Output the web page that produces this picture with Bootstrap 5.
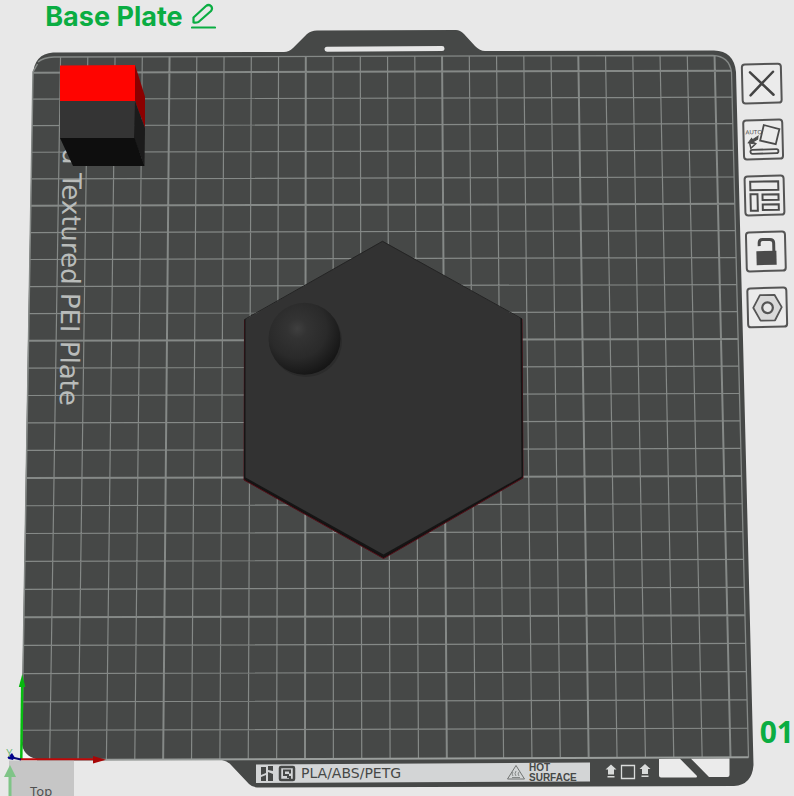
<!DOCTYPE html>
<html lang="en">
<head>
<meta charset="utf-8">
<meta name="viewport" content="width=device-width, initial-scale=1">
<title>Base Plate</title>
<link rel="stylesheet" href="https://cdn.jsdelivr.net/npm/bootstrap@5.3.0/dist/css/bootstrap.min.css">
<style>
  body { background: #e8e8e8; font-family: Inter, "Open Sans", sans-serif; }
  .stage { aspect-ratio: 794 / 796; }
  .plate-head { top: 0; left: 5.7%; color: #0aad42; }
  .plate-title { font-size: 27px; line-height: 33px; font-weight: 700; }
  .tool { color: #4b4b4b; line-height: 0; }
  .plate-tools { top: 7.9%; right: 1.1%; gap: 15px; transform: rotate(-1.4deg); }
  .plate-tools .tool { width: 41px; height: 41px; border: 2px solid #555; border-radius: 4px; background: #ebebeb; }
  .plate-number { right: 0; bottom: 5.4%; color: #0aad42; font-family: "Open Sans", sans-serif; font-size: 30px; line-height: 42px; font-weight: 700; }
</style>
<script src="https://cdn.jsdelivr.net/npm/bootstrap@5.3.0/dist/js/bootstrap.bundle.min.js"></script>
</head>
<body>
<main class="stage position-relative w-100 overflow-hidden">
  <svg class="d-block w-100 h-100" viewBox="0 0 794 796" role="img" aria-label="Build plate seen from the top">
    <defs>
      <radialGradient id="ball" cx="0.4" cy="0.36" r="0.68">
        <stop offset="0" stop-color="#3f3f3f"/><stop offset="0.2" stop-color="#333"/>
        <stop offset="0.6" stop-color="#2a2a2a"/><stop offset="1" stop-color="#141414"/>
      </radialGradient>
      <clipPath id="bed"><path d="M33.5 75 Q34 57 52 57 L713 55.500 Q730 56 731.500 72 L748.500 757.500 L38 760 Q22 757 21.500 742Z"/></clipPath>
    </defs>

    <!-- plate body with handle and label strip -->
    <path fill="#464847" d="M33 75 Q34 54 53 52.500 L284 52 Q289 52 293 48 L307 34 Q311 30.500 317 30.500 L456 30 Q460 30 464 34 L475 46 Q480 51 485 51 L714 50.500 Q734 51 736 72 L743 340 L753.500 765 Q752 785 734 786 L257 787.500 Q252 787 249 784 L232 766 Q228 761 222 760 L39 759.500 Q22 757 21.500 740 L28 340Z"/>
    <path fill="none" stroke="#e6e6e6" stroke-width="5" stroke-linecap="round" d="M327 49.200 L442 48.600"/>
    <path fill="none" stroke="#858987" stroke-width="1.500" d="M37.500 64 L33 72 L21.800 742"/>
    <g clip-path="url(#bed)" fill="none" stroke="#858987">
      <path id="thin" stroke-width="1.200"/>
      <path id="thick" stroke-width="2"/>
    </g>
    <path fill="none" stroke="#858987" stroke-width="1.300" d="M38 62 Q43 57.500 54 57 L713 55.500 Q729 56 731.500 72 L748.500 757.500"/>
    <path fill="none" stroke="#9a9e9c" stroke-width="2" d="M37 760 L748.500 757.300"/>

    <text transform="translate(63 148) rotate(90.700)" font-family="DejaVu Sans, sans-serif" font-size="26" fill="#b9bcba">d Textured PEI Plate</text>

    <!-- label strip -->
    <path fill="#d3d5d6" d="M256 764.500 L590 762.500 V781.500 L256 783Z"/>
    <path fill="#464847" d="M261 767h5v6l-5 2zM268 766h5v5l-5-1zM261 777l5-2v6h-5zM268 772l5 2v7h-5z"/>
    <rect x="280" y="767" width="14" height="13" rx="1" fill="none" stroke="#464847" stroke-width="2.500"/>
    <path fill="none" stroke="#464847" stroke-width="2" d="M283 770.500h7v3M284 770v5h4v3M290 776v3"/>
    <g font-family="DejaVu Sans, sans-serif" fill="#464847">
      <text x="301" y="778" font-size="14">PLA/ABS/PETG</text>
      <g font-family="Liberation Sans, sans-serif" font-size="10" font-weight="bold">
        <text x="529" y="771">HOT</text>
        <text x="529" y="781">SURFACE</text>
      </g>
    </g>
    <path fill="none" stroke="#707372" d="M516 765.500 L507.500 779 H524.500Z"/>
    <path fill="none" stroke="#707372" stroke-width="0.800" d="M513 776q-2-2 0-4M516 776q-2-2 0-5M519 776q-2-2 0-4M512 777.500h8"/>
    <g fill="#d9dbda">
      <path d="M611 764.500 L616.500 769.500 H614 V774.500 H608 V769.500 H605.500ZM607.500 776h7v1.600h-7z"/>
      <path d="M645 764 L650.500 769 H648 V774 H642 V769 H639.500ZM641.500 775.500h7v1.600h-7z"/>
      <path fill="none" stroke="#d9dbda" stroke-width="1.300" d="M621.500 765.500h13v13h-13z"/>
      <path fill="#ebebeb" d="M659 759 L680 758.800 L697 776 Q697 777.500 696 777.500 H661 Q659 777.500 659 775.500ZM691 758.700 L729.500 758.500 V775 Q729.500 777 727.500 777 H709Z"/>
    </g>

    <!-- two-colour block -->
    <path fill="#ff0400" d="M60 65.500 L135 65 L135.500 101 H60Z"/>
    <path fill="#8c0000" d="M135 65 L145 96.500 V128 L135 101Z"/>
    <path fill="#343434" d="M60 101 H135.500 L134.500 138 H60Z"/>
    <path fill="#1b1b1b" d="M135 101 L145 128 L144.500 166 L134 138Z"/>
    <path fill="#0e0e0e" d="M60 138 H134.500 L144.500 166 H73Z"/>

    <!-- hexagonal base -->
    <path fill="#1a1010" stroke="#521019" stroke-width="1" d="M244.500 320 L244 480 L383.500 558.500 L523 478 L522 319Z"/>
    <path fill="#151515" d="M244.500 319 L244 478.500 L383.500 557 L523 476.500 L522 318Z"/>
    <path fill="#323232" d="M382.500 241 L520.500 318.500 L521.500 476.500 L383.500 554.500 L245.500 477.500 V319.500Z"/>
    <path fill="none" stroke="#242424" d="M244.500 319.500 L382.500 241.300 L521.500 318.500"/>
    <ellipse cx="306" cy="341" rx="36" ry="36" fill="#2b2b2b"/>
    <circle cx="304.500" cy="338.700" r="36" fill="url(#ball)"/>

    <!-- origin axes -->
    <path fill="#f4f4f4" d="M22 747 Q25 757 36 759 H22Z"/>
    <path fill="#c6c6c6" d="M9 760.500H74V796H9Z"/>
    <path stroke="#7fc487" stroke-width="3" d="M10 774V796"/>
    <path fill="#7fc487" d="M10 765L16 777H4Z"/>
    <path stroke="#07bd10" stroke-width="2.500" d="M21.300 759L22.200 684"/>
    <path fill="#07b80f" d="M22.300 674L25.300 687H18.800Z"/>
    <path stroke="#bd0808" stroke-width="2" d="M20 759.300H95"/>
    <path fill="#a80606" d="M106 759.800L93 756V763.500Z"/>
    <path stroke="#050575" stroke-width="2" d="M21 759.500L12 757.500"/>
    <path fill="#00008c" d="M7.500 757.500L12 753L14.500 757L13 760L8.500 759Z"/>
    <text x="6" y="757" font-family="Liberation Sans, sans-serif" font-size="10" fill="#72ba7a">Y</text>
    <text x="30" y="796" font-family="Noto Sans, sans-serif" font-size="13" fill="#505050">Top</text>
  </svg>

  <header class="plate-head position-absolute d-flex align-items-center gap-2">
    <h1 class="plate-title m-0">Base Plate</h1>
    <button type="button" class="btn p-0 border-0 lh-1" aria-label="Rename plate">
      <svg class="d-block" width="25" height="28" viewBox="0 0 25 28" fill="none" stroke="#0aad42" stroke-width="2.200" stroke-linecap="round" stroke-linejoin="round"><path d="M1 24.500H24M2.500 19.500V14.500L15 3Q17.500 1 20 3Q22 5.500 20 8L7.500 19Q5 20 2.500 19.500Z"/></svg>
    </button>
  </header>

  <nav class="plate-tools position-absolute d-flex flex-column" aria-label="Plate tools">
    <button type="button" class="tool btn p-0 d-flex align-items-center justify-content-center" aria-label="Remove plate contents">
      <svg width="37" height="37" viewBox="0 0 37 37" stroke="#444" stroke-width="2.500" stroke-linecap="round"><path d="M7 7L30 30M30 7L7 30"/></svg>
    </button>
    <button type="button" class="tool btn p-0 d-flex align-items-center justify-content-center" aria-label="Auto orient">
      <svg width="37" height="37" viewBox="0 0 37 37" fill="none" stroke="#4b4b4b" stroke-width="1.800"><path d="M19.500 4L35 8.500L31 23.500L15.500 19.500Z"/><rect x="5.500" y="28.500" width="28" height="4" rx="2"/><path fill="#4b4b4b" stroke-width="1" d="M13.500 15L8 18.500L7 17L3.500 21.500L8.500 22.500L8.500 20.500L13 18Z"/><path stroke-width="1.500" d="M5 22L6 27L11 22.500L8 21"/><text x="1" y="13" font-family="Liberation Sans, sans-serif" font-size="6" fill="#4b4b4b" stroke="none">AUTO</text></svg>
    </button>
    <button type="button" class="tool btn p-0 d-flex align-items-center justify-content-center" aria-label="Arrange objects">
      <svg width="37" height="37" viewBox="0 0 37 37" fill="none" stroke="#4b4b4b" stroke-width="2"><path d="M4.500 4.500H32.500V13H4.500ZM4.500 17H11.500V33.500H4.500ZM16.500 17.500H32.500V23H16.500ZM16.500 27.500H32.500V33H16.500Z"/></svg>
    </button>
    <button type="button" class="tool btn p-0 d-flex align-items-center justify-content-center" aria-label="Lock plate">
      <svg width="37" height="37" viewBox="0 0 37 37"><path fill="#4b4b4b" d="M9 18H29V32H9Z"/><path fill="none" stroke="#4b4b4b" stroke-width="3" d="M12 13V10Q12 6.500 15.500 6.500H22.500Q26.500 6.500 26.500 10V19"/></svg>
    </button>
    <button type="button" class="tool btn p-0 d-flex align-items-center justify-content-center" aria-label="Plate settings">
      <svg width="37" height="37" viewBox="0 0 37 37" fill="#d9d9d9" stroke="#555" stroke-width="1.800" stroke-linejoin="round"><path d="M11.500 6H26L33 18.500L26 31.500H11.500L4.500 18.500Z"/><circle cx="18.800" cy="18.800" r="5.300" fill="#e8e8e8" stroke-width="2.200"/></svg>
    </button>
  </nav>

  <div class="plate-number position-absolute">01</div>
</main>
<script>
  // Bed grid: every fifth line is heavier; spacing widens toward the near edge.
  let thin = '', thick = '';
  for (let n = 1; n <= 25; n++) {
    const line = `M${33.3 + 27.25 * n} 56L${21.3 + 28.37 * n} 759`;
    if (n % 5) thin += line; else thick += line;
  }
  for (let k = 0; k < 25; k++) {
    const y = 72.7 + 26.4 * k + 0.0416 * k * k;
    const line = `M20 ${y}L750 ${y - 2}`;
    if (k % 5) thin += line; else thick += line;
  }
  document.getElementById('thin').setAttribute('d', thin);
  document.getElementById('thick').setAttribute('d', thick);
</script>
</body>
</html>
